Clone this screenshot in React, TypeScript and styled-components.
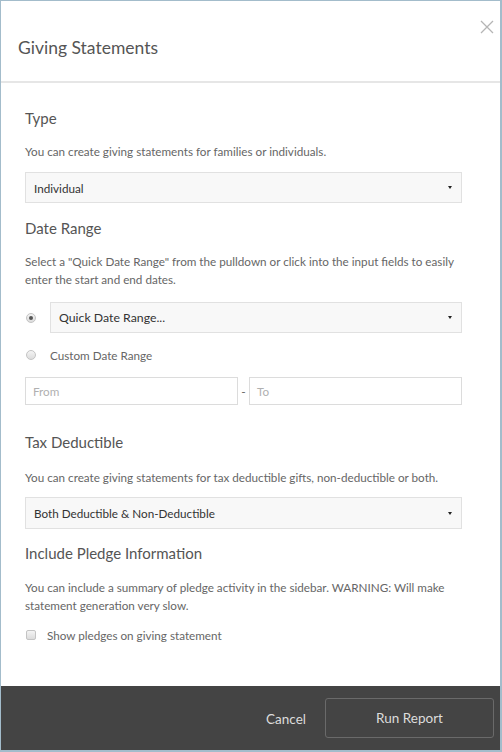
import React from "react";
import styled, { createGlobalStyle } from "styled-components";

const GlobalStyle = createGlobalStyle`
  html, body { margin: 0; padding: 0; background: #ffffff; }
  body { font-family: "Lato", "Liberation Sans", sans-serif; }
  * { box-sizing: border-box; }
`;

const Modal = styled.div`
  width: 502px;
  height: 752px;
  display: flex;
  flex-direction: column;
  background: #ffffff;
  border-style: solid;
  border-color: #a3bccb;
  border-width: 1px 2px 2px 1px;
  position: relative;
`;

const Header = styled.header`
  height: 82px;
  flex: none;
  padding: 37px 17px 0;
  border-bottom: 2px solid #e6e6e6;
`;

const Title = styled.h1`
  margin: 0;
  font-size: 17.5px;
  line-height: 20px;
  font-weight: 400;
  color: #555555;
`;

const CloseButton = styled.button`
  position: absolute;
  top: 18px;
  right: 5px;
  width: 16px;
  height: 16px;
  padding: 0;
  border: none;
  background: transparent;
  cursor: pointer;
  svg { display: block; }
`;

const Body = styled.main`
  flex: 1;
  padding: 25px 38px 0 24px;
  display: flex;
  flex-direction: column;
`;

const SectionTitle = styled.h2<{ $top?: number }>`
  margin: ${(p) => p.$top ?? 0}px 0 0;
  font-size: 15px;
  line-height: 20px;
  font-weight: 400;
  color: #555555;
`;

const Description = styled.p<{ $top?: number }>`
  margin: ${(p) => p.$top ?? 14}px 0 0;
  font-size: 11.7px;
  line-height: 18px;
  color: #666666;
`;

const SelectBox = styled.div<{ $top?: number; $height?: number; $size?: number; $grow?: boolean }>`
  margin-top: ${(p) => p.$top ?? 12}px;
  height: ${(p) => p.$height ?? 31}px;
  flex: ${(p) => (p.$grow ? "1" : "none")};
  display: flex;
  align-items: center;
  justify-content: space-between;
  padding: 0 9px 0 8px;
  background: #f8f8f8;
  border: 1px solid #e1e1e1;
  font-size: ${(p) => p.$size ?? 11.7}px;
  color: #333333;
`;

const Caret = styled.span`
  width: 0;
  height: 0;
  border-left: 2.5px solid transparent;
  border-right: 2.5px solid transparent;
  border-top: 3px solid #222222;
`;

const RadioRow = styled.div<{ $top: number }>`
  margin-top: ${(p) => p.$top}px;
  display: flex;
  align-items: center;
`;

const Radio = styled.span<{ $checked?: boolean }>`
  width: 10px;
  height: 10px;
  margin: 0 14px 0 1px;
  flex: none;
  border-radius: 50%;
  border: 1px solid #c4c4c4;
  background: linear-gradient(#f4f4f4, #dcdcdc);
  display: flex;
  align-items: center;
  justify-content: center;
  &::after {
    content: "";
    display: ${(p) => (p.$checked ? "block" : "none")};
    width: 4px;
    height: 4px;
    border-radius: 50%;
    background: #555555;
  }
`;

const OptionLabel = styled.span`
  font-size: 11.7px;
  line-height: 20px;
  color: #666666;
`;

const DateInputs = styled.div`
  margin-top: 12px;
  display: flex;
  align-items: center;
`;

const TextInput = styled.div`
  flex: 1;
  height: 28px;
  display: flex;
  align-items: center;
  padding: 0 7px;
  border: 1px solid #dcdcdc;
  font-size: 11.7px;
  color: #b0b0b0;
`;

const Dash = styled.span`
  width: 11px;
  text-align: center;
  font-size: 12px;
  color: #666666;
`;

const CheckRow = styled.label`
  margin-top: 11px;
  display: flex;
  align-items: center;
  font-size: 11.7px;
  line-height: 20px;
  color: #666666;
`;

const Checkbox = styled.span`
  width: 10px;
  height: 10px;
  margin: 0 11px 0 1px;
  border-radius: 2px;
  border: 1px solid #c4c4c4;
  background: linear-gradient(#f4f4f4, #dcdcdc);
`;

const Footer = styled.footer`
  height: 64px;
  flex: none;
  background: #444444;
  display: flex;
  align-items: center;
  justify-content: flex-end;
  padding: 0 6px 0 0;
  gap: 19px;
`;

const CancelButton = styled.button`
  border: none;
  background: transparent;
  color: #dcdcdc;
  font-family: inherit;
  font-size: 13.5px;
  padding: 0;
  margin-top: 2px;
`;

const PrimaryButton = styled.button`
  width: 169px;
  height: 40px;
  border: 1px solid #6a6a6a;
  border-radius: 3px;
  background: #444444;
  color: #dcdcdc;
  font-family: inherit;
  font-size: 13.5px;
`;

export default function App() {
  return (
    <>
      <GlobalStyle />
      <Modal>
        <Header>
          <Title>Giving Statements</Title>
        </Header>
        <CloseButton aria-label="Close">
          <svg width="16" height="16" viewBox="0 0 16 16">
            <path d="M2 2 L14 14 M14 2 L2 14" stroke="#b5b5b5" strokeWidth="1.3" fill="none" />
          </svg>
        </CloseButton>
        <Body>
          <SectionTitle>Type</SectionTitle>
          <Description $top={14}>You can create giving statements for families or individuals.</Description>
          <SelectBox $top={12} $height={31}>
            Individual
            <Caret />
          </SelectBox>

          <SectionTitle $top={15}>Date Range</SectionTitle>
          <Description $top={14}>
            Select a "Quick Date Range" from the pulldown or click into the input fields to easily enter the start and end dates.
          </Description>
          <RadioRow $top={14}>
            <Radio $checked />
            <SelectBox $top={0} $height={31} $size={12.3} $grow>
              Quick Date Range...
              <Caret />
            </SelectBox>
          </RadioRow>
          <RadioRow $top={12}>
            <Radio />
            <OptionLabel>Custom Date Range</OptionLabel>
          </RadioRow>
          <DateInputs>
            <TextInput>From</TextInput>
            <Dash>-</Dash>
            <TextInput>To</TextInput>
          </DateInputs>

          <SectionTitle $top={27}>Tax Deductible</SectionTitle>
          <Description $top={16}>
            You can create giving statements for tax deductible gifts, non-deductible or both.
          </Description>
          <SelectBox $top={11} $height={32}>
            Both Deductible &amp; Non-Deductible
            <Caret />
          </SelectBox>

          <SectionTitle $top={14}>Include Pledge Information</SectionTitle>
          <Description $top={15}>
            You can include a summary of pledge activity in the sidebar. WARNING: Will make statement generation very slow.
          </Description>
          <CheckRow>
            <Checkbox />
            Show pledges on giving statement
          </CheckRow>
        </Body>
        <Footer>
          <CancelButton>Cancel</CancelButton>
          <PrimaryButton>Run Report</PrimaryButton>
        </Footer>
      </Modal>
    </>
  );
}
